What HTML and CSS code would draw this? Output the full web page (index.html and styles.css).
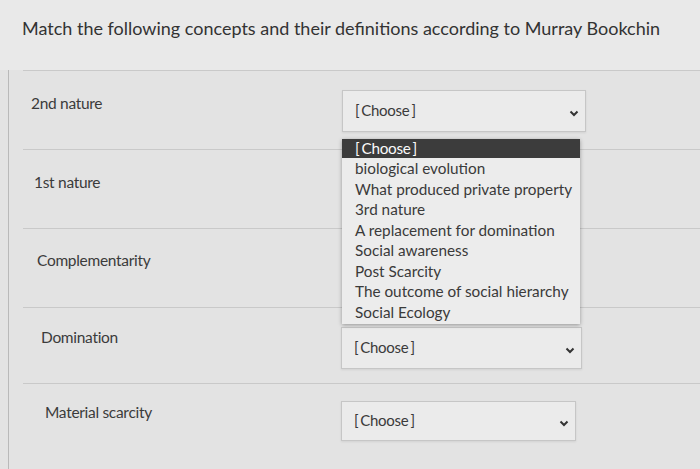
FILE: index.html
```html
<!DOCTYPE html>
<html>
<head>
<meta charset="utf-8">
<link rel="stylesheet" href="styles.css">
</head>
<body>
<div class="page">
  <header class="head">
    <h1 class="title">Match the following concepts and their definitions according to Murray Bookchin</h1>
  </header>
  <div class="quiz">
    <div class="row r1">
      <div class="label">2nd nature</div>
      <div class="field">
        <div class="select"><span class="choose">[ Choose ]</span><svg class="chev" viewBox="0 0 10 7" width="10" height="7"><path d="M1.5 1.5 L5 5 L8.5 1.5" fill="none" stroke="#333" stroke-width="2"/></svg></div>
        <ul class="menu">
          <li class="on"><span class="choose">[ Choose ]</span></li>
          <li>biological evolution</li>
          <li>What produced private property</li>
          <li>3rd nature</li>
          <li>A replacement for domination</li>
          <li>Social awareness</li>
          <li>Post Scarcity</li>
          <li>The outcome of social hierarchy</li>
          <li>Social Ecology</li>
        </ul>
      </div>
    </div>
    <div class="row r2">
      <div class="label">1st nature</div>
      <div class="field"></div>
    </div>
    <div class="row r3">
      <div class="label">Complementarity</div>
      <div class="field"></div>
    </div>
    <div class="row r4">
      <div class="label">Domination</div>
      <div class="field">
        <div class="select"><span class="choose">[ Choose ]</span><svg class="chev" viewBox="0 0 10 7" width="10" height="7"><path d="M1.5 1.5 L5 5 L8.5 1.5" fill="none" stroke="#333" stroke-width="2"/></svg></div>
      </div>
    </div>
    <div class="row r5">
      <div class="label">Material scarcity</div>
      <div class="field">
        <div class="select narrow"><span class="choose">[ Choose ]</span><svg class="chev" viewBox="0 0 10 7" width="10" height="7"><path d="M1.5 1.5 L5 5 L8.5 1.5" fill="none" stroke="#333" stroke-width="2"/></svg></div>
      </div>
    </div>
  </div>
</div>
</body>
</html>
```

FILE: styles.css
```css
html, body {
  margin: 0;
  padding: 0;
}
body {
  width: 700px;
  height: 469px;
  overflow: hidden;
  background: #e3e3e3;
  font-family: Lato, "Open Sans", sans-serif;
  color: #3a3a3a;
}
.page {
  height: 469px;
}
.head {
  background: #e9e9e9;
  height: 70px;
  box-sizing: border-box;
  padding: 15px 0 0 22px;
}
.title {
  margin: 0;
  font-size: 18px;
  font-weight: 400;
  line-height: 26px;
  color: #333;
}
.quiz {
  margin-left: 8px;
  border-left: 1px solid #b9b9b9;
  padding-left: 14px;
  height: 399px;
  box-sizing: border-box;
}
.row {
  display: grid;
  grid-template-columns: 319px 244px;
  border-top: 1px solid #c9c9c9;
  height: 79px;
  box-sizing: border-box;
}
.r4 { height: 76px; }
.r5 { height: 80px; }
.label {
  font-size: 15.5px;
  line-height: 20px;
  letter-spacing: -0.3px;
  color: #3b3b3b;
}
.r1 .label { padding-top: 22px; padding-left: 8px; }
.r2 .label { padding-top: 22px; padding-left: 11px; }
.r3 .label { padding-top: 21px; padding-left: 14px; }
.r4 .label { padding-top: 19px; padding-left: 18px; }
.r5 .label { padding-top: 18px; padding-left: 22px; }
.field {
  position: relative;
  padding-top: 19px;
}
.r5 .field { padding-top: 17px; }
.select {
  height: 42px;
  box-sizing: border-box;
  border: 1px solid #c6c6c6;
  background: #ebebeb;
  display: flex;
  align-items: center;
  justify-content: space-between;
  padding: 0 6px 0 12px;
  font-size: 15px;
  color: #3a3a3a;
  box-shadow: 0 1px 2px rgba(0,0,0,0.08);
}
.r4 .select { width: 241px; margin-left: -1px; }
.select.narrow { width: 235px; height: 40px; margin-left: -1px; }
.select .choose { margin-top: -2px; }
.choose {
  word-spacing: -1.5px;
  letter-spacing: -0.3px;
}
.chev { margin-top: 4px; }
.menu {
  position: absolute;
  left: 0;
  top: 68px;
  width: 238px;
  margin: 0;
  padding: 0 0 2px 0;
  list-style: none;
  background: #ececec;
  box-shadow: 0 1px 4px rgba(0,0,0,0.35);
  z-index: 5;
  font-size: 15.3px;
}
.menu li {
  line-height: 20.5px;
  padding-left: 13px;
  color: #3a3a3a;
  white-space: nowrap;
}
.menu li.on {
  background: #3c3c3c;
  color: #fafafa;
  line-height: 19px;
}
```
